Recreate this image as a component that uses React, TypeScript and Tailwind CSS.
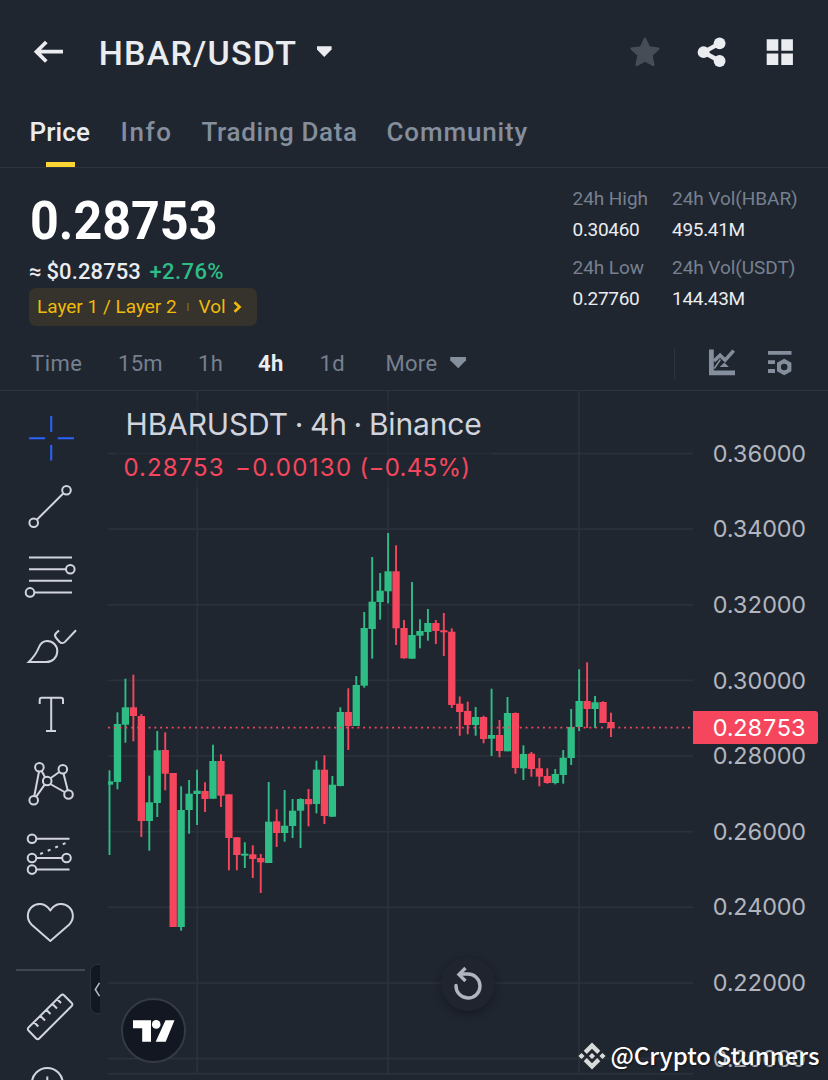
import React from "react";

type Candle = [high: number, top: number, bottom: number, low: number, up: 0 | 1];

const candles: Candle[] = [
  [770.3, 781.3, 784.7, 855, 1],
  [712.3, 724, 782, 789.3, 1],
  [678.7, 707.3, 724.7, 742.7, 1],
  [674.7, 707.3, 716, 741.3, 0],
  [714, 716, 821, 837, 0],
  [775.7, 802.3, 821, 850.7, 1],
  [731, 750.3, 803, 817, 1],
  [732.3, 750, 773.7, 790.3, 0],
  [773, 773, 927, 927, 0],
  [786.3, 810, 927, 930.7, 1],
  [780, 793.7, 810, 833.7, 1],
  [769.7, 790.7, 794, 825, 1],
  [782.3, 791, 799, 812, 0],
  [744.7, 761, 798.7, 799, 1],
  [754.3, 761, 795.7, 807, 0],
  [794.3, 794.3, 838, 870.3, 0],
  [837, 837.3, 855, 870.3, 0],
  [842.3, 853.7, 855.7, 868, 1],
  [845.3, 854.3, 859, 878, 0],
  [854, 858, 862.3, 893, 0],
  [782, 821.7, 863, 863, 1],
  [809.3, 821.3, 833, 847, 0],
  [790, 825.7, 833, 841.7, 1],
  [799, 810.7, 826, 838, 1],
  [798.3, 799, 810.7, 848, 1],
  [789, 799, 804.3, 826.3, 0],
  [760.7, 769.7, 804, 813.3, 1],
  [755.3, 769.7, 816, 824, 0],
  [776, 784.7, 816.7, 817, 1],
  [707.3, 712, 786, 786.3, 1],
  [688.3, 712, 726, 750, 0],
  [676, 685, 726, 726, 1],
  [612, 628, 685.7, 687.7, 1],
  [557, 601.7, 629, 658.7, 1],
  [573, 590.7, 602, 619.7, 1],
  [533, 571.3, 591.3, 603.3, 1],
  [545.3, 571.3, 628.3, 645, 0],
  [620, 628, 658.3, 658.7, 0],
  [582, 635, 658.7, 658.7, 1],
  [619.3, 631, 635.7, 648.3, 1],
  [609, 623, 632, 640.7, 1],
  [620, 623, 631, 644, 0],
  [613, 630.3, 632.3, 656, 0],
  [628.3, 631.7, 705, 708, 0],
  [696.5, 703.7, 712, 735.8, 0],
  [701.7, 711, 725, 734.3, 0],
  [707, 717, 725, 735.7, 1],
  [715.7, 717, 739, 743.3, 0],
  [688.7, 735, 738.7, 756, 1],
  [720, 735, 751, 757.3, 0],
  [697, 713, 751.3, 751.3, 1],
  [712.5, 713, 768, 773.7, 0],
  [745.3, 754, 768.3, 780, 1],
  [752, 753.7, 769, 776.7, 0],
  [758, 768.3, 776.7, 786.3, 0],
  [768.3, 776, 783, 783.7, 0],
  [769, 774, 783, 784.3, 1],
  [750, 757.7, 775, 783.7, 1],
  [709, 727, 758, 765, 1],
  [669.3, 701, 727, 731, 1],
  [662.3, 701, 709, 728, 0],
  [696, 702.3, 709, 728, 1],
  [701.3, 702, 723, 723, 0],
  [712.7, 722, 728, 737, 0],
];

const CANDLE_START = 109.5;
const CANDLE_STEP = 7.96;
const gridRows = [453.5, 529.1, 604.8, 680.4, 756, 831.7, 907.3, 983, 1058.6];
const gridCols = [197.3, 387.9, 579];
const axisLabels = ["0.36000", "0.34000", "0.32000", "0.30000", "0.28000", "0.26000", "0.24000", "0.22000", "0.20000"];

function Header() {
  return (
    <header className="flex h-[104px] shrink-0 items-center pl-[33px] pr-[35px] text-[#eaecef]">
      <svg className="h-[24px] w-[31px]" viewBox="33 39.5 31 24" fill="none" stroke="currentColor" strokeWidth="3.8">
        <path d="M63 51.2H37M46.3 41.5L36.5 51.2l9.8 9.8" />
      </svg>
      <h1 className="ml-[34.7px] mt-[1px] whitespace-nowrap text-[34px] font-medium leading-[40px] tracking-[1.2px]">HBAR/USDT</h1>
      <svg className="ml-[18px] h-[14px] w-[18px]" viewBox="315 45 18 14" fill="currentColor">
        <path d="M317 46.2h14.6v3.2L324.2 57 317 49.4z" />
      </svg>
      <div className="ml-auto flex items-center">
        <svg className="h-[32px] w-[32px] text-[#474d57]" viewBox="629 36 32 32" fill="currentColor" stroke="currentColor" strokeWidth="2.4" strokeLinejoin="round">
          <path d="M645 38.8l4 8.6 9.4 1.2-6.9 6.5 1.8 9.9-8.3-4.5-8.3 4.5 1.8-9.9-6.9-6.5 9.4-1.2z" />
        </svg>
        <svg className="ml-[36px] h-[32px] w-[30px]" viewBox="697 36 30 32" fill="currentColor">
          <path d="M719.6 43.3L703.6 52.2l16 8.8" fill="none" stroke="currentColor" strokeWidth="4.4" />
          <circle cx="719.6" cy="43.3" r="5.9" />
          <circle cx="703.6" cy="52.2" r="5.9" />
          <circle cx="719.6" cy="61" r="5.9" />
        </svg>
        <svg className="ml-[39px] h-[26px] w-[27px]" viewBox="766 39 27 26" fill="currentColor">
          <path d="M766.7 39.2h11.6v11.6h-11.6zM781.3 39.2h11.6v11.6h-11.6zM766.7 53.4h11.6V65h-11.6zM781.3 53.4h11.6V65h-11.6z" />
        </svg>
      </div>
    </header>
  );
}

function Tabs() {
  return (
    <nav className="flex h-[64px] shrink-0 whitespace-nowrap border-b border-[#2e343e] pl-[29.5px] text-[26px] font-medium leading-[57px] text-[#848e9c]">
      <div className="flex w-[91px] flex-col text-[#eaecef]">
        <span className="h-[58px] tracking-[0.15px]">Price</span>
        <span className="ml-[16px] h-[5px] w-[29.5px] bg-[#fcd535]" />
      </div>
      <span className="w-[81px] tracking-[1.6px]">Info</span>
      <span className="w-[185px] tracking-[0.66px]">Trading Data</span>
      <span className="tracking-[0.85px]">Community</span>
    </nav>
  );
}

function Stat({ label, value }: { label: string; value: string }) {
  return (
    <div>
      <div className="h-[31px] text-[19px] leading-[24px] tracking-[-0.05px] text-[#76808f]">{label}</div>
      <div className="h-[38.3px] text-[19px] leading-[24px] tracking-[-0.3px] text-[#eaecef]">{value}</div>
    </div>
  );
}

function PriceSummary() {
  return (
    <section className="flex h-[168px] shrink-0 whitespace-nowrap pl-[29px]">
      <div className="w-[543.5px] pt-[20px]">
        <div className="ml-px h-[70px] origin-left scale-x-[0.93] text-[54px] font-bold leading-[66px] text-white">0.28753</div>
        <div className="flex h-[30px] text-[22px] font-medium leading-[28px] text-[#eaecef]">
          <span className="w-[17.5px]">≈</span>
          <span className="w-[103px] tracking-[0.1px]">$0.28753</span>
          <span className="tracking-[0.4px] text-[#2ebd85]">+2.76%</span>
        </div>
        <div className="flex h-[38px] w-[228px] items-center rounded-[7px] bg-[#35332c] pl-[8px] text-[19px] text-[#f0b90b]">
          <span className="mt-px w-[149.5px]">Layer 1 / Layer 2</span>
          <span className="h-[8px] w-[2px] bg-[#6c5720]" />
          <span className="ml-[10px] mt-px">Vol</span>
          <svg className="ml-[7px] h-[12px] w-[9px]" viewBox="0 0 9 12" fill="none" stroke="currentColor" strokeWidth="2.6">
            <path d="M1.5 1.2L6.6 6 1.5 10.8" />
          </svg>
        </div>
      </div>
      <div className="flex pt-[18.5px]">
        <div className="w-[99.5px]">
          <Stat label="24h High" value="0.30460" />
          <Stat label="24h Low" value="0.27760" />
        </div>
        <div>
          <Stat label="24h Vol(HBAR)" value="495.41M" />
          <Stat label="24h Vol(USDT)" value="144.43M" />
        </div>
      </div>
    </section>
  );
}

function Intervals() {
  return (
    <nav className="flex h-[55px] shrink-0 items-center whitespace-nowrap border-b border-[#2e343e] pl-[31px] text-[22px] tracking-[0.3px] text-[#76808f]">
      <span className="w-[87px] tracking-[0.5px]">Time</span>
      <span className="w-[80px]">15m</span>
      <span className="w-[60px]">1h</span>
      <span className="w-[61.5px] font-bold text-[#eaecef]">4h</span>
      <span className="w-[66px]">1d</span>
      <span className="w-[63px]">More</span>
      <svg className="h-[14px] w-[18px] text-[#848e9c]" viewBox="449 356 18 14" fill="currentColor">
        <path d="M450.2 357H466v3.2L458.2 368.2 450.2 360.2z" />
      </svg>
      <span className="ml-[207px] h-[31px] w-px bg-[#2e343e]" />
      <svg className="ml-[33px] h-[28px] w-[28px] text-[#848e9c]" viewBox="708 349 28 28" fill="currentColor">
        <path d="M709 349.4h4.8v21.2H735v4.6h-26z" />
        <path d="M714 361l6.1-5.8 5 5 8.6-9.6" fill="none" stroke="currentColor" strokeWidth="3.6" />
        <path d="M714.2 368.5l6.2-9" fill="none" stroke="currentColor" strokeWidth="1.6" />
        <path d="M724.3 362.4l4.6 4.6h-9.2z" />
      </svg>
      <svg className="ml-[31px] h-[28px] w-[26px] text-[#848e9c]" viewBox="767 348.5 26 28" fill="currentColor">
        <path d="M768 350.5h23.5v3.8H768zM768 359.8h7v3.8h-7zM768 368.6h7v3.8h-7z" />
        <path fillRule="evenodd" d="M784.2 358.2l7.2 4.1v8.4l-7.2 4-7.2-4v-8.4zM784.2 363.2a3.3 3.3 0 1 0 0 6.6a3.3 3.3 0 1 0 0-6.6z" />
      </svg>
    </nav>
  );
}

function Tool({ top, children }: { top: number; children: React.ReactNode }) {
  return (
    <button className="block h-[69px] w-[100px] shrink-0 text-[#d1d4dc]">
      <svg className="block h-[69px] w-[100px]" viewBox={`0 ${top} 100 69`} fill="none" stroke="currentColor" strokeWidth="2">
        {children}
      </svg>
    </button>
  );
}

function Toolbar() {
  return (
    <aside className="flex w-[108px] shrink-0 flex-col overflow-hidden pt-[13px]">
      <Tool top={404}>
        <path className="stroke-[#2962ff]" d="M51.2 416v16M51.2 445v15.5M29 438.3h16M57.8 438.3H74" />
      </Tool>
      <Tool top={473}>
        <circle cx="66.5" cy="490.2" r="4.3" />
        <circle cx="33.7" cy="522.8" r="4.3" />
        <path d="M63.4 493.2L36.8 519.8" />
      </Tool>
      <Tool top={542}>
        <path d="M29 557.6h43M29 569.2h37M29 580.8h43M35 592.4h37" />
        <circle cx="70.3" cy="569.2" r="4.3" />
        <circle cx="30" cy="592.4" r="4.3" />
      </Tool>
      <Tool top={611}>
        <path d="M28.8 662c6-6 8.5-10.5 10-14.5c1.5-3.8 4.500-6.500 8.500-6.500a10 10 0 0 1 10 10c0 6.500-5 11-11 11z" />
        <path d="M59 630.5l-2.800 2.500c-1.500 1.500-1.500 3.500 0 5l3.200 3.700c1.600 1.600 3.900 1.900 5.600.2L76 630.300" />
      </Tool>
      <Tool top={680}>
        <path d="M39.700 704v-4.300c0-1.200.8-2 2-2h19.300c1.200 0 2 .8 2 2v4.300M51.200 698v32.500M46 731h10" />
      </Tool>
      <Tool top={749}>
        <circle cx="39.400" cy="767.300" r="4.300" />
        <circle cx="62.800" cy="769.300" r="4.300" />
        <circle cx="47.200" cy="781" r="4.300" />
        <circle cx="68.500" cy="794.500" r="4.300" />
        <circle cx="33.700" cy="800.300" r="4.300" />
        <path d="M39 771.600L34.300 796M41.700 771l3.300 6.300M50.500 778.300l8.700-6.300M63.500 773.600l4.200 16.600M50.300 784l14.200 8M44.700 784.600l-8.500 12" />
      </Tool>
      <Tool top={818}>
        <circle cx="32" cy="838.700" r="4.300" />
        <circle cx="32" cy="858" r="4.300" />
        <circle cx="66.500" cy="858" r="4.300" />
        <circle cx="32" cy="869.600" r="4.300" />
        <path d="M36.500 838.700H69.500M36.500 858H62M36.500 869.600H69.500" />
        <path d="M40.200 854L68 842" strokeDasharray="3 5.200" />
      </Tool>
      <Tool top={887}>
        <path d="M50.300 910.500c-5.500-8.500-14.500-7.500-18.800-3.200c-5 5-4.800 12.500.2 17.500l18.600 16.200l18.700-16.200c5-5 5.200-12.500.2-17.500c-4.400-4.300-13.400-5.300-18.900 3.200z" strokeLinejoin="round" />
      </Tool>
      <div className="ml-[16px] mt-[13px] h-[1.5px] w-[69px] shrink-0 bg-[#434651]" />
      <div className="h-[11.5px] shrink-0" />
      <Tool top={982}>
        <path d="M28.500 1030.500a2 2 0 0 1 0-3L61 995.300a2 2 0 0 1 3 0l7.700 7.700a2 2 0 0 1 0 3L39.200 1038.500a2 2 0 0 1-3 0zM34.300 1022.500l4 4M40.500 1016l4.500 4.500M46.500 1010l4 4M52.500 1004l4.500 4.500M57.500 999.500l3.500 3.500" />
      </Tool>
      <Tool top={1051}>
        <circle cx="47.300" cy="1083.500" r="15.500" />
        <path d="M47.300 1076.500v14M40.300 1083.500h14" />
      </Tool>
    </aside>
  );
}

function CandleChart() {
  return (
    <svg className="block h-[689px] w-[585px]" viewBox="108 391 585 689">
      <g className="fill-[#2c323c]">
        {gridRows.map((y) => (
          <rect key={y} x="108" y={y - 0.8} width="585" height="1.6" />
        ))}
        {gridCols.map((x) => (
          <rect key={x} x={x - 0.8} y="391" width="1.6" height="682" />
        ))}
        <rect x="108" y="1073" width="585" height="1.5" />
      </g>
      {candles.map(([high, top, bottom, low, up], i) => {
        const x = CANDLE_START + i * CANDLE_STEP;
        return (
          <g key={i} className={up ? "fill-[#2ebd85]" : "fill-[#f6465d]"}>
            <rect x={x - 0.95} y={high} width="1.9" height={low - high} />
            <rect x={x - 3.65} y={top} width="7.3" height={bottom - top} />
          </g>
        );
      })}
      <path className="stroke-[#f6465d]" d="M108 727.6H693" strokeWidth="1.9" strokeDasharray="1.9 3.9" />
    </svg>
  );
}

function ChartLegend() {
  return (
    <div className="absolute left-[8px] top-[8px] w-[375px] whitespace-nowrap font-['Inter',sans-serif]">
      <div className="h-[50px] bg-[#202630]/50 pl-[9.5px] text-[30px] leading-[50px] tracking-[-0.15px] text-[#d1d4dc] [word-spacing:-1.5px]">
        HBARUSDT · 4h · Binance
      </div>
      <div className="flex h-[38px] bg-[#202630]/50 pl-[7.5px] text-[24px] leading-[38px] text-[#f6465d]">
        <span className="w-[111.5px] tracking-[1.05px]">0.28753</span>
        <span className="w-[124.5px] tracking-[1.35px]">−0.00130</span>
        <span className="tracking-[0.3px]">(−0.45%)</span>
      </div>
    </div>
  );
}

function TradingViewBadge() {
  return (
    <div className="absolute left-[12.5px] top-[606.5px] flex h-[65px] w-[65px] items-center justify-center rounded-full border-2 border-[#343a46] bg-[#131722]">
      <svg className="ml-px mt-[2px] h-[22px] w-[42px]" viewBox="133 1020.6 42 22" fill="white">
        <path d="M133 1020.8h18v21.6h-8.800v-13.600H133zM165.500 1020.800h9L165.700 1042.400h-10z" />
        <circle cx="156.200" cy="1025" r="4.300" />
      </svg>
    </div>
  );
}

function ResetButton() {
  return (
    <button className="absolute left-[333px] top-[566px] flex h-[54px] w-[54px] items-center justify-center rounded-full bg-[#1f242e] text-[#b2b5be] shadow-[0_3px_8px_rgba(8,11,18,0.45)]">
      <svg className="h-[36px] w-[30px]" viewBox="453 965.5 30 36" fill="none" stroke="currentColor" strokeWidth="3.4">
        <path d="M456 985A12 12 0 1 0 468 973.500H460" strokeLinecap="round" />
        <path d="M465.500 967.500L459 974l6.500 6.500" />
      </svg>
    </button>
  );
}

function PriceAxis() {
  return (
    <div className="relative w-[135px] shrink-0 pt-[24.5px] font-['Inter',sans-serif] text-[23.5px] tracking-[-0.65px] tabular-nums text-[#b2b5be]">
      {axisLabels.map((label) => (
        <div key={label} className="flex h-[75.63px] items-center pl-[19.5px]">
          {label}
        </div>
      ))}
      <div className="absolute left-0 top-[320px] flex h-[33px] w-[125px] items-center rounded-r-[3px] bg-[#f6465d] pl-[19.5px] text-white">
        0.28753
      </div>
    </div>
  );
}

function Watermark() {
  return (
    <div className="absolute bottom-[9px] right-[8.5px] flex items-center whitespace-nowrap font-['Noto_Sans_CJK_SC',sans-serif] text-[24px] font-medium leading-[32px] text-white [text-shadow:1px_1px_2px_rgba(0,0,0,0.5)]">
      <svg className="mr-[4px] mt-[2px] h-[28px] w-[28px]" viewBox="-14 -14 28 28" fill="#d9dadb">
        <path d="M0-13.5L8.3-5.2 5.2-2.1 0-7.3-5.2-2.1-8.3-5.2zM0 13.5L8.3 5.2 5.2 2.1 0 7.3-5.2 2.1-8.3 5.2zM0-3.1L3.1 0 0 3.1-3.1 0zM-10.5-3.1L-7.4 0-10.5 3.1-13.6 0zM10.5-3.1L13.6 0 10.5 3.1 7.4 0z" />
      </svg>
      @Crypto Stunners
    </div>
  );
}

export default function App() {
  return (
    <main className="relative flex h-[1080px] w-[828px] flex-col overflow-hidden bg-[#202630] font-['Roboto',sans-serif]">
      <Header />
      <Tabs />
      <PriceSummary />
      <Intervals />
      <div className="flex h-[689px] overflow-hidden">
        <Toolbar />
        <div className="relative w-[585px] shrink-0">
          <CandleChart />
          <ChartLegend />
          <TradingViewBadge />
          <ResetButton />
          <div className="absolute left-[-18px] top-[573px] flex h-[50px] w-[10px] items-center justify-end rounded-l-[7px] border border-r-0 border-[#2c323c] bg-[#131722]">
            <svg className="h-[15px] w-[6px]" viewBox="0 0 6 15" fill="none" stroke="#b2b5be" strokeWidth="1.6">
              <path d="M5.5.8L1.3 7.5l4.2 6.7" />
            </svg>
          </div>
        </div>
        <PriceAxis />
      </div>
      <Watermark />
    </main>
  );
}
